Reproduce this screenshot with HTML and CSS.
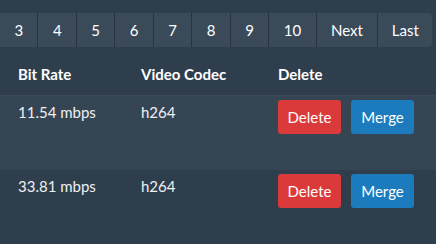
FILE: index.html
```html
<!DOCTYPE html>
<html lang="en">
<head>
    <meta charset="UTF-8">
    <meta name="viewport" content="width=device-width, initial-scale=1.0">
    <title>Files</title>
    <link rel="stylesheet" href="styles.css">
</head>
<body>
    <ul class="pagination">
        <li class="page-item">3</li>
        <li class="page-item">4</li>
        <li class="page-item">5</li>
        <li class="page-item">6</li>
        <li class="page-item">7</li>
        <li class="page-item">8</li>
        <li class="page-item">9</li>
        <li class="page-item">10</li>
        <li class="page-item">Next</li>
        <li class="page-item last">Last</li>
    </ul>

    <div class="file-table">
        <div class="row head">
            <div class="cell">Bit Rate</div>
            <div class="cell">Video Codec</div>
            <div class="cell">Delete</div>
        </div>
        <div class="row striped">
            <div class="cell">11.54 mbps</div>
            <div class="cell">h264</div>
            <div class="cell actions">
                <button class="btn btn-delete">Delete</button>
                <button class="btn btn-merge">Merge</button>
            </div>
        </div>
        <div class="row">
            <div class="cell">33.81 mbps</div>
            <div class="cell">h264</div>
            <div class="cell actions">
                <button class="btn btn-delete">Delete</button>
                <button class="btn btn-merge">Merge</button>
            </div>
        </div>
    </div>
</body>
</html>
```

FILE: styles.css
```css
body {
    background-color: #2f3e4c;
    color: #eef1f4;
    font-family: Lato, "Open Sans", sans-serif;
    font-size: 15px;
    margin: 0;
    overflow: hidden;
}
.pagination {
    display: flex;
    list-style: none;
    margin: 13px 0 0 0;
    padding: 0;
}
.page-item {
    display: flex;
    align-items: center;
    justify-content: center;
    height: 34px;
    padding: 0 14.4px;
    background-color: #3a4a59;
    color: #fff;
    border-left: 1px solid #263442;
}
.page-item:first-child {
    border-left: none;
}
.page-item.text {
    padding: 0 13.5px;
}
.page-item.last {
    padding: 0 13.5px;
    border-radius: 0 4px 4px 0;
}
.file-table {
    margin-top: 4px;
}
.row {
    display: grid;
    grid-template-columns: 123px 137px 1fr;
    padding: 5px 0 0 18px;
    min-height: 69px;
    line-height: 22px;
}
.row.head {
    padding: 12px 0 10px 18px;
    min-height: 0;
    font-weight: bold;
    color: #fff;
    border-bottom: 1px solid #3b4957;
}
.row.striped {
    background-color: #364553;
}
.actions {
    display: flex;
    align-items: flex-start;
    gap: 10px;
    margin-top: -1px;
}
.btn {
    height: 34px;
    width: 63px;
    border: none;
    border-radius: 3px;
    font-family: inherit;
    font-size: 15px;
    color: #fff;
    cursor: pointer;
}
.btn-delete {
    background-color: #db3a3a;
}
.btn-merge {
    background-color: #1b7bbd;
}
```
